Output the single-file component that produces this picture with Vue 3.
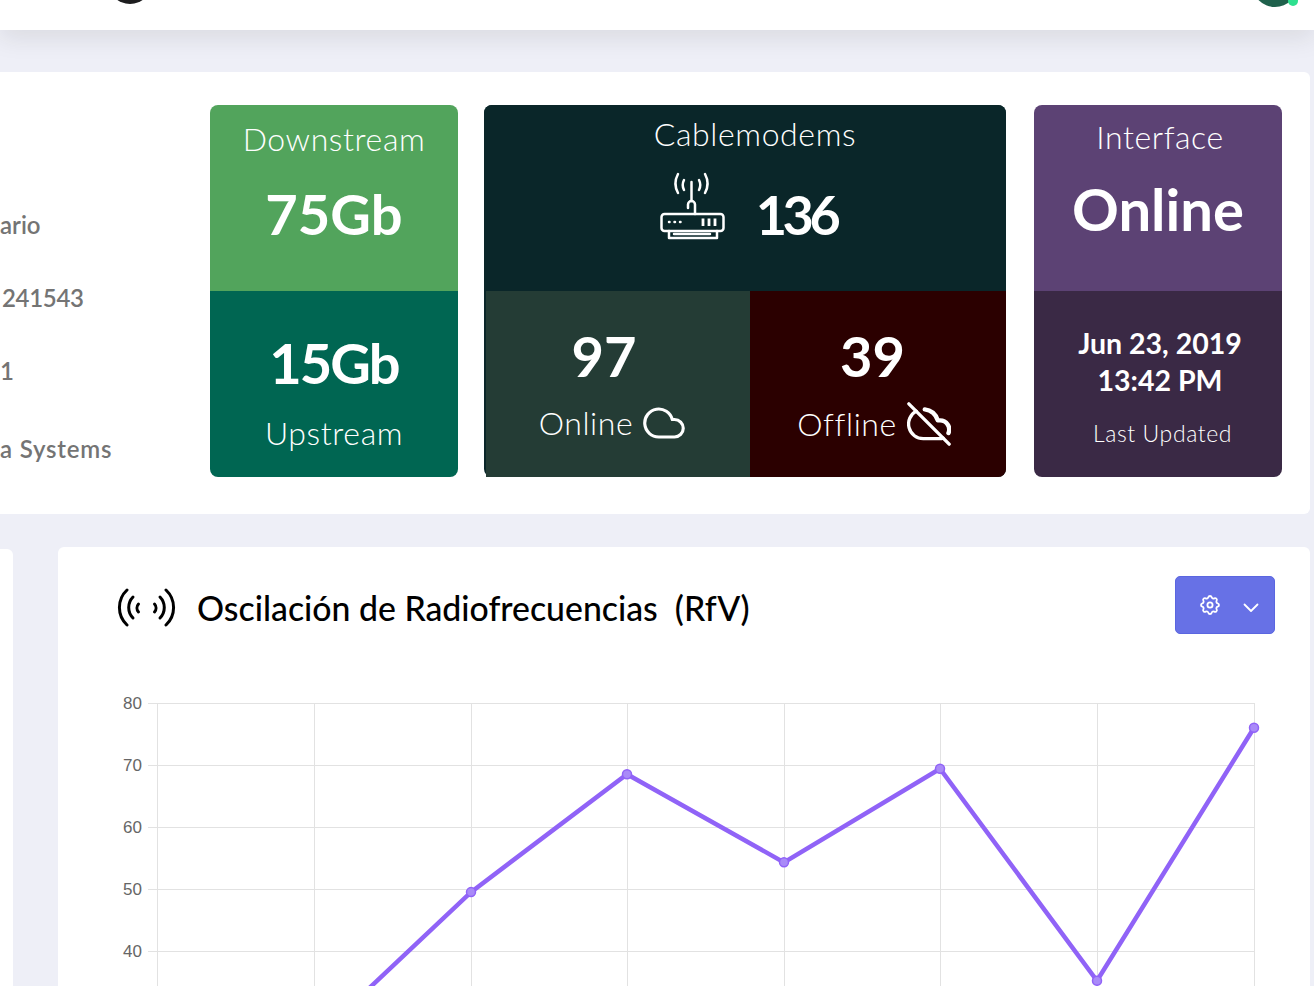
<script setup>
const gridX = [47, 204, 361, 517, 674, 830, 987, 1144]
const gridTicks = [80, 70, 60, 50, 40, 30]
const labelTicks = [80, 70, 60, 50, 40]
const tickY = (v) => 13 + (80 - v) * 6.2

const values = [10, 25.6, 49.5, 68.5, 54.3, 69.4, 35.2, 76]
const points = values.map((v, i) => ({ x: gridX[i], y: tickY(v) }))
const linePoints = points.map((p) => `${p.x},${p.y}`).join(' ')

const infoRows = ['ario', '241543', '1', 'a Systems']
</script>

<template>
  <div class="page">
    <header class="topbar">
      <span class="logo-dot"></span>
      <span class="avatar"><span class="avatar-status"></span></span>
    </header>

    <main class="content">
      <section class="card summary">
        <div class="info">
          <div v-for="row in infoRows" :key="row" class="info-row">{{ row }}</div>
        </div>

        <div class="tile">
          <div class="tile-top green">
            <div class="tile-label down-label">Downstream</div>
            <div class="tile-value">75Gb</div>
          </div>
          <div class="tile-bottom teal">
            <div class="tile-value up-value">15Gb</div>
            <div class="tile-label up-label">Upstream</div>
          </div>
        </div>

        <div class="tile modems">
          <div class="tile-top dark">
            <div class="tile-label modem-label">Cablemodems</div>
            <div class="modem-total">
              <svg class="router" viewBox="0 0 66 70" fill="none" stroke="#fff" stroke-width="2.5" stroke-linecap="round" stroke-linejoin="round">
                <path d="M18 2A20 20 0 0 0 18 21" />
                <path d="M24 8A11 11 0 0 0 24 18" />
                <path d="M45 2A20 20 0 0 1 45 21" />
                <path d="M39 8A11 11 0 0 1 39 18" />
                <path d="M31.5 10V29" />
                <path d="M28 36V32.500A3.500 3.500 0 0 1 35 32.500V42" />
                <rect x="1.500" y="42" width="62" height="17" rx="3" />
                <path d="M9 59V66H57V59M14 62H50" />
                <path d="M9 50H9.500M14.500 50H15M20 50H20.500" />
                <path d="M43 46.500V54M49 46.500V54M55 46.500V54" stroke-width="2.800" stroke-linecap="butt" />
              </svg>
              <span class="tile-value total-value">136</span>
            </div>
          </div>
          <div class="modem-split">
            <div class="modem-cell online">
              <div class="tile-value cell-value">97</div>
              <div class="cell-label">
                <span class="tile-label">Online</span>
                <svg class="cloud" viewBox="0 0 24 24" fill="none" stroke="#fff" stroke-width="1.800" stroke-linecap="round" stroke-linejoin="round">
                  <path d="M18 10h-1.260A8 8 0 1 0 9 20h9a5 5 0 0 0 0-10z" />
                </svg>
              </div>
            </div>
            <div class="modem-cell offline">
              <div class="tile-value cell-value">39</div>
              <div class="cell-label">
                <span class="tile-label">Offline</span>
                <svg class="cloud-off" viewBox="0 0 24 24" fill="none" stroke="#fff" stroke-width="1.800" stroke-linecap="round" stroke-linejoin="round">
                  <path d="M22.610 16.950A5 5 0 0 0 18 10h-1.260a8 8 0 0 0-7.050-6" stroke-width="2.400" />
                  <path d="M5 5a8 8 0 0 0 4 15h9a5 5 0 0 0 1.700-.3" />
                  <path d="M1 1l22 22" />
                </svg>
              </div>
            </div>
          </div>
        </div>

        <div class="tile">
          <div class="tile-top purple">
            <div class="tile-label iface-label">Interface</div>
            <div class="tile-value iface-value">Online</div>
          </div>
          <div class="tile-bottom plum">
            <div class="updated-date">Jun 23, 2019<br />13:42 PM</div>
            <div class="updated-label">Last Updated</div>
          </div>
        </div>
      </section>

      <div class="lower">
        <div class="card side-card"></div>

        <section class="card chart-card">
          <div class="chart-head">
            <svg class="broadcast" viewBox="0 0 60 40" fill="none" stroke="#000" stroke-width="3" stroke-linecap="round">
              <path d="M10 2A24 24 0 0 0 10 37" />
              <path d="M16 9A15 15 0 0 0 16 30" />
              <path d="M21.500 16A6 6 0 0 0 21.500 24" />
              <path d="M49 2A24 24 0 0 1 49 37" />
              <path d="M43 9A15 15 0 0 1 43 30" />
              <path d="M37.500 16A6 6 0 0 1 37.500 24" />
            </svg>
            <h2 class="chart-title">Oscilación de Radiofrecuencias&nbsp; (RfV)</h2>
            <button class="settings-btn" type="button">
              <svg class="gear" viewBox="0 0 24 24" fill="none" stroke="#fff" stroke-width="1.800" stroke-linecap="round" stroke-linejoin="round">
                <path d="M10.325 4.317c.426-1.756 2.924-1.756 3.350 0a1.724 1.724 0 002.573 1.066c1.543-.94 3.310.826 2.370 2.370a1.724 1.724 0 001.065 2.572c1.756.426 1.756 2.924 0 3.350a1.724 1.724 0 00-1.066 2.573c.94 1.543-.826 3.310-2.370 2.370a1.724 1.724 0 00-2.572 1.065c-.426 1.756-2.924 1.756-3.350 0a1.724 1.724 0 00-2.573-1.066c-1.543.94-3.310-.826-2.370-2.370a1.724 1.724 0 00-1.065-2.572c-1.756-.426-1.756-2.924 0-3.350a1.724 1.724 0 001.066-2.573c-.94-1.543.826-3.310 2.370-2.370.996.608 2.296.070 2.572-1.065z" />
                <circle cx="12" cy="12" r="2.600" />
              </svg>
              <svg class="chevron" viewBox="0 0 16 10" fill="none" stroke="#fff" stroke-width="1.800" stroke-linecap="round" stroke-linejoin="round">
                <path d="M1.500 1.500L8 8l6.500-6.500" />
              </svg>
            </button>
          </div>

          <svg class="chart" width="1160" height="400" viewBox="0 0 1160 400">
            <g stroke="#e2e2e2" stroke-width="1">
              <line v-for="x in gridX" :key="x" :x1="x + 0.5" :x2="x + 0.5" y1="13" y2="400" />
              <line v-for="t in gridTicks" :key="t" x1="38" x2="1144.500" :y1="tickY(t) + 0.5" :y2="tickY(t) + 0.5" />
            </g>
            <text v-for="t in labelTicks" :key="'l' + t" class="tick" x="32" :y="tickY(t) + 5.500" text-anchor="end">{{ t }}</text>
            <polyline :points="linePoints" fill="none" stroke="#9063f7" stroke-width="4.500" />
            <circle v-for="p in points" :key="p.x" :cx="p.x" :cy="p.y" r="4.500" fill="#a98af8" stroke="#9063f7" stroke-width="1.500" />
          </svg>
        </section>
      </div>
    </main>
  </div>
</template>

<style>
html,
body {
  margin: 0;
  background: #eeeff7;
}
</style>

<style scoped>
.page {
  position: relative;
  width: 1314px;
  height: 986px;
  overflow: hidden;
  background: #eeeff7;
  font-family: Lato, "Noto Sans", sans-serif;
}

/* header */
.topbar {
  position: relative;
  z-index: 1;
  display: flex;
  justify-content: space-between;
  height: 30px;
  padding: 0 16px 0 108px;
  background: #fff;
  box-shadow: 0 8px 24px rgba(40, 40, 30, 0.1);
}

.logo-dot {
  width: 44px;
  height: 44px;
  margin-top: -40px;
  border-radius: 50%;
  background: #1d1d1f;
}

.avatar {
  position: relative;
  width: 46px;
  height: 46px;
  margin-top: -39px;
  border-radius: 50%;
  background: #1f614c;
}

.avatar-status {
  position: absolute;
  right: 0;
  bottom: 1px;
  width: 10px;
  height: 10px;
  border-radius: 50%;
  background: #2ee08f;
}

.content {
  padding-top: 42px;
}

.card {
  background: #fff;
  border-radius: 6px;
}

/* summary */
.summary {
  display: flex;
  width: 1330px;
  height: 442px;
  margin-left: -20px;
  padding: 33px 28px 37px 20px;
  box-sizing: border-box;
}

.info {
  width: 210px;
  padding-top: 83px;
  color: #747474;
  font-size: 24px;
  font-weight: 600;
}

.info-row {
  height: 73px;
  line-height: 73px;
  white-space: nowrap;
}

.info-row:nth-child(2) {
  padding-left: 2px;
  letter-spacing: -0.3px;
}

.info-row:last-child {
  margin-top: 5px;
  letter-spacing: 0.8px;
}

.tile {
  display: flex;
  flex-direction: column;
  width: 248px;
  border-radius: 8px;
  overflow: hidden;
  color: #fff;
  text-align: center;
}

.tile-top,
.tile-bottom {
  height: 186px;
  box-sizing: border-box;
}

.green { background: #52a45c; }
.teal { background: #006652; }
.dark { background: #0a2629; }
.purple { background: #5c4274; }
.plum { background: #3a2945; }

.tile-label {
  font-size: 32px;
  font-weight: 300;
  line-height: 38px;
  letter-spacing: 0.6px;
}

.tile-value {
  font-size: 56px;
  font-weight: 700;
  line-height: 70px;
}

.down-label { padding-top: 15px; }
.tile-top .tile-value { margin-top: 21px; }
.up-value { padding-top: 37px; letter-spacing: -2px; }
.up-label { margin-top: 16px; }
.iface-label { padding: 13px 0 0 4px; }
.tile-top .iface-value { margin-top: 18px; font-size: 58px; }

/* cablemodems */
.modems {
  width: 522px;
  margin: 0 28px 0 26px;
  overflow: visible;
  background: #0a2629;
}

.modems .tile-top {
  border-radius: 8px 8px 0 0;
}

.modem-label {
  padding: 10px 0 0 20px;
}

.modem-total {
  display: flex;
  justify-content: center;
  align-items: center;
  gap: 30px;
  margin-top: 10px;
  padding-left: 6px;
}

.tile-top .total-value {
  margin-top: 17px;
  font-size: 54px;
  letter-spacing: -4.500px;
}

.router {
  width: 66px;
  height: 70px;
}

.modem-split {
  display: flex;
  height: 186px;
  margin-left: 2px;
}

.modem-cell {
  flex: 1;
  padding-top: 32px;
  box-sizing: border-box;
}

.online {
  flex: none;
  width: 264px;
  background: #243c35;
}

.online .cell-value { padding-right: 28px; }
.online .cell-label { padding-right: 12px; }

.offline {
  background: #2b0000;
  border-radius: 0 0 8px 0;
}

.offline .cell-value { padding-right: 11px; }
.offline .cell-label { padding-right: 8px; }

.cell-value {
  line-height: 66px;
}

.cell-label {
  display: flex;
  justify-content: center;
  align-items: center;
  gap: 10px;
  margin-top: 13px;
}

.cloud {
  width: 42px;
  height: 42px;
}

.cloud-off {
  width: 44px;
  height: 44px;
}

/* interface */
.tile-bottom.plum {
  padding: 34px 0 0 4px;
}

.updated-date {
  font-size: 28.500px;
  font-weight: 700;
  line-height: 37px;
}

.updated-label {
  margin-top: 19px;
  padding-left: 5px;
  font-size: 23px;
  font-weight: 300;
  line-height: 30px;
  letter-spacing: 0.6px;
}

/* lower row */
.lower {
  display: flex;
  gap: 45px;
  margin-top: 33px;
}

.side-card {
  width: 13px;
  margin-top: 2px;
  border-radius: 0 6px 0 0;
}

.chart-card {
  width: 1252px;
  height: 500px;
  padding: 29px 35px 0 59px;
  box-sizing: border-box;
}

.chart-head {
  display: flex;
  align-items: center;
  gap: 20px;
  height: 58px;
}

.broadcast {
  width: 60px;
  height: 40px;
  margin-top: 6px;
}

.chart-title {
  flex: 1;
  margin: 6px 0 0;
  color: #000;
  font-size: 33.800px;
  font-weight: 500;
}

.settings-btn {
  display: flex;
  align-items: center;
  gap: 21px;
  width: 100px;
  height: 58px;
  padding: 0 0 0 22px;
  border: 1px solid #5a66e0;
  border-radius: 5px;
  background: #6771e6;
  box-sizing: border-box;
}

.gear {
  width: 24px;
  height: 24px;
}

.chevron {
  width: 16px;
  height: 10px;
  margin-top: 6px;
}

.chart {
  display: block;
  margin: 56px 0 0 -7px;
}

.tick {
  font-family: "Liberation Sans", Arial, sans-serif;
  font-size: 17px;
  fill: #666;
}
</style>
